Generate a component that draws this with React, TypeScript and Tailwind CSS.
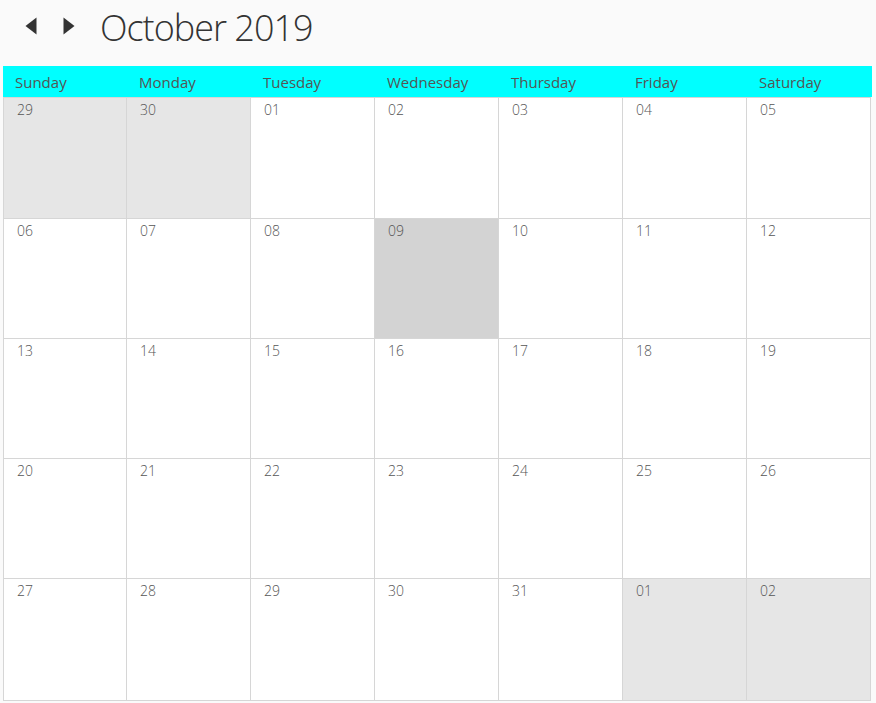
import React from "react";

const days = ["Sunday", "Monday", "Tuesday", "Wednesday", "Thursday", "Friday", "Saturday"];

type Cell = { label: string; other?: boolean; selected?: boolean };

function buildCells(): Cell[] {
  const cells: Cell[] = [{ label: "29", other: true }, { label: "30", other: true }];
  for (let d = 1; d <= 31; d++) {
    cells.push({ label: d.toString().padStart(2, "0"), selected: d === 9 });
  }
  cells.push({ label: "01", other: true }, { label: "02", other: true });
  return cells;
}

export default function App() {
  const cells = buildCells();
  return (
    <div
      className="w-[876px] h-[703px] bg-[#fafafa] overflow-hidden"
      style={{ fontFamily: "'Open Sans', 'Noto Sans', sans-serif" }}
    >
      <div className="h-[66px] flex items-start">
        <button className="ml-[25px] mt-[17px] w-[12px] h-[18px] flex items-center justify-center">
          <svg width="12" height="18" viewBox="0 0 12 18">
            <polygon points="11.5,0.5 11.5,17.5 0.5,9" fill="#333" />
          </svg>
        </button>
        <button className="ml-[26px] mt-[17px] w-[12px] h-[18px] flex items-center justify-center">
          <svg width="12" height="18" viewBox="0 0 12 18">
            <polygon points="0.5,0.5 0.5,17.5 11.5,9" fill="#333" />
          </svg>
        </button>
        <div className="ml-[25px] mt-[10px] text-[36px] font-light text-[#333] leading-none tracking-[-1px]">
          October 2019
        </div>
      </div>
      <div className="ml-[3px] w-[869px]">
        <div className="grid grid-cols-[repeat(7,124px)] h-[31px] bg-[#00ffff] w-[869px]">
          {days.map((d) => (
            <div key={d} className="pl-[12px] flex items-center text-[15px] text-[#555] pt-[1px]">
              {d}
            </div>
          ))}
        </div>
        <div className="grid grid-cols-[123px_repeat(6,124px)] grid-rows-[121px_120px_120px_120px_122px] border-l border-t border-[#d6d6d6] w-[868px]">
          {cells.map((c, i) => (
            <div
              key={i}
              className={`border-r border-b border-[#d6d6d6] pl-[13px] pt-[1px] text-[14px] font-light text-[#555] ${
                c.selected ? "bg-[#d3d3d3]" : c.other ? "bg-[#e6e6e6]" : "bg-white"
              }`}
            >
              {c.label}
            </div>
          ))}
        </div>
      </div>
    </div>
  );
}
